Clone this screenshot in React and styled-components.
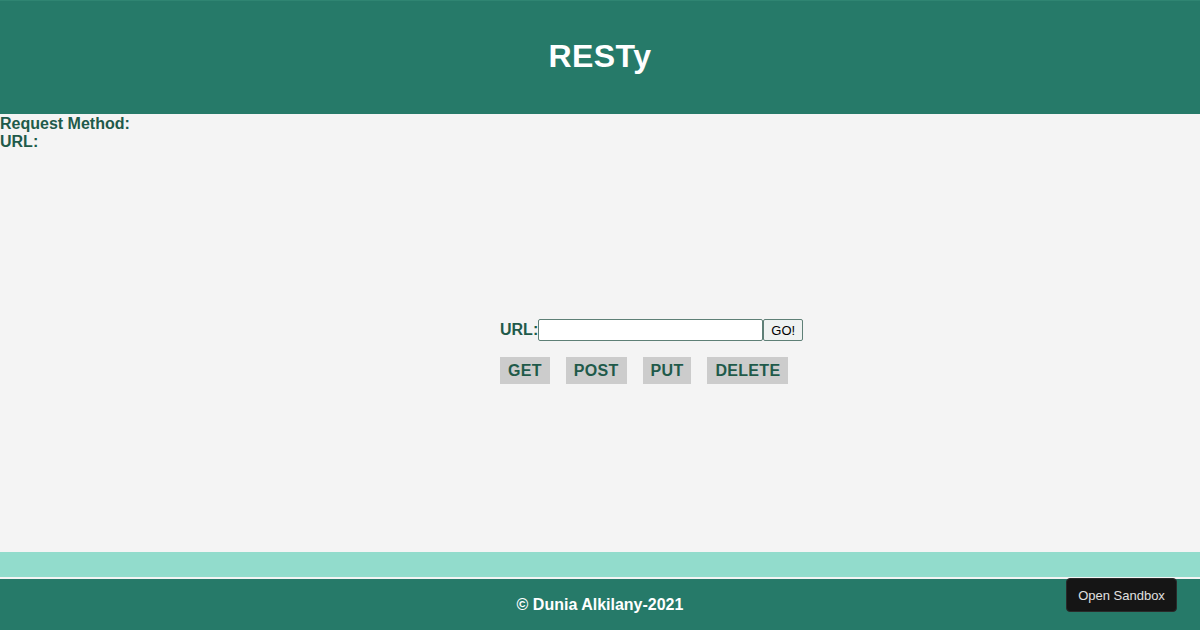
import React from "react";
import styled, { createGlobalStyle } from "styled-components";

const Global = createGlobalStyle`
  html, body { margin: 0; padding: 0; background: #f4f4f4; }
  body { font-family: "Liberation Sans", Arial, sans-serif; overflow: hidden; }
`;

const Page = styled.div`
  width: 1200px;
  height: 630px;
  display: flex;
  flex-direction: column;
  position: relative;
`;

const Header = styled.header`
  height: 113px;
  border-top: 1px solid #2f8572;
  background: #267a69;
  display: flex;
  align-items: center;
  justify-content: center;
`;

const Title = styled.h1`
  margin: 0;
  font-size: 32px;
  font-weight: bold;
  color: #ffffff;
  line-height: 1;
  padding-bottom: 3px;
  letter-spacing: 0.4px;
`;

const Main = styled.main`
  height: 438px;
  background: #f4f4f4;
  display: flex;
  flex-direction: column;
`;

const Info = styled.div`
  display: flex;
  flex-direction: column;
  padding-top: 1px;
`;

const InfoLine = styled.div`
  font-size: 16px;
  font-weight: bold;
  color: #1f5a4a;
  line-height: 18px;
`;

const Form = styled.form`
  margin: 168px 0 0 500px;
  display: flex;
  flex-direction: column;
  gap: 16px;
`;

const UrlRow = styled.div`
  display: flex;
  align-items: center;
  height: 22px;
`;

const Label = styled.label`
  font-size: 16px;
  font-weight: bold;
  color: #1f5a4a;
`;

const Input = styled.input`
  box-sizing: border-box;
  width: 225px;
  height: 22px;
  border: 1px solid #5e7f76;
  border-radius: 2px;
  background: #fff;
  margin: 0;
  padding: 0 4px;
`;

const Go = styled.button`
  box-sizing: border-box;
  width: 40px;
  height: 22px;
  border: 1px solid #5e7f76;
  border-radius: 2px;
  background: #eff2f1;
  color: #000;
  font-family: "Liberation Sans", Arial, sans-serif;
  font-size: 13px;
  padding: 0;
  margin: 0;
`;

const Methods = styled.div`
  display: flex;
  gap: 16px;
`;

const Method = styled.button`
  height: 27px;
  padding: 0 8px;
  border: none;
  background: #cccccc;
  color: #1f5a4a;
  font-family: "Liberation Sans", Arial, sans-serif;
  font-size: 16px;
  font-weight: bold;
  letter-spacing: 0.3px;
  margin: 0;
`;

const Band = styled.div`
  height: 25px;
  background: #92dccc;
  border-bottom: 2px solid #f4f4f4;
`;

const Footer = styled.footer`
  flex: 1;
  background: #267a69;
  display: flex;
  align-items: center;
  justify-content: center;
  color: #fff;
  font-size: 16px;
  font-weight: bold;
`;

const Sandbox = styled.button`
  position: absolute;
  left: 1066px;
  top: 578px;
  width: 111px;
  height: 34px;
  background: #151515;
  color: #e0e0e0;
  border: 1px solid #2a2a2a;
  border-radius: 4px;
  font-family: "Liberation Sans", Arial, sans-serif;
  font-size: 13px;
  padding: 0;
`;

export default function App() {
  return (
    <Page>
      <Global />
      <Header>
        <Title>RESTy</Title>
      </Header>
      <Main>
        <Info>
          <InfoLine>Request Method:</InfoLine>
          <InfoLine>URL:</InfoLine>
        </Info>
        <Form onSubmit={(e) => e.preventDefault()}>
          <UrlRow>
            <Label>URL:</Label>
            <Input type="text" />
            <Go type="submit">GO!</Go>
          </UrlRow>
          <Methods>
            <Method type="button">GET</Method>
            <Method type="button">POST</Method>
            <Method type="button">PUT</Method>
            <Method type="button">DELETE</Method>
          </Methods>
        </Form>
      </Main>
      <Band />
      <Footer>© Dunia Alkilany-2021</Footer>
      <Sandbox>Open Sandbox</Sandbox>
    </Page>
  );
}
